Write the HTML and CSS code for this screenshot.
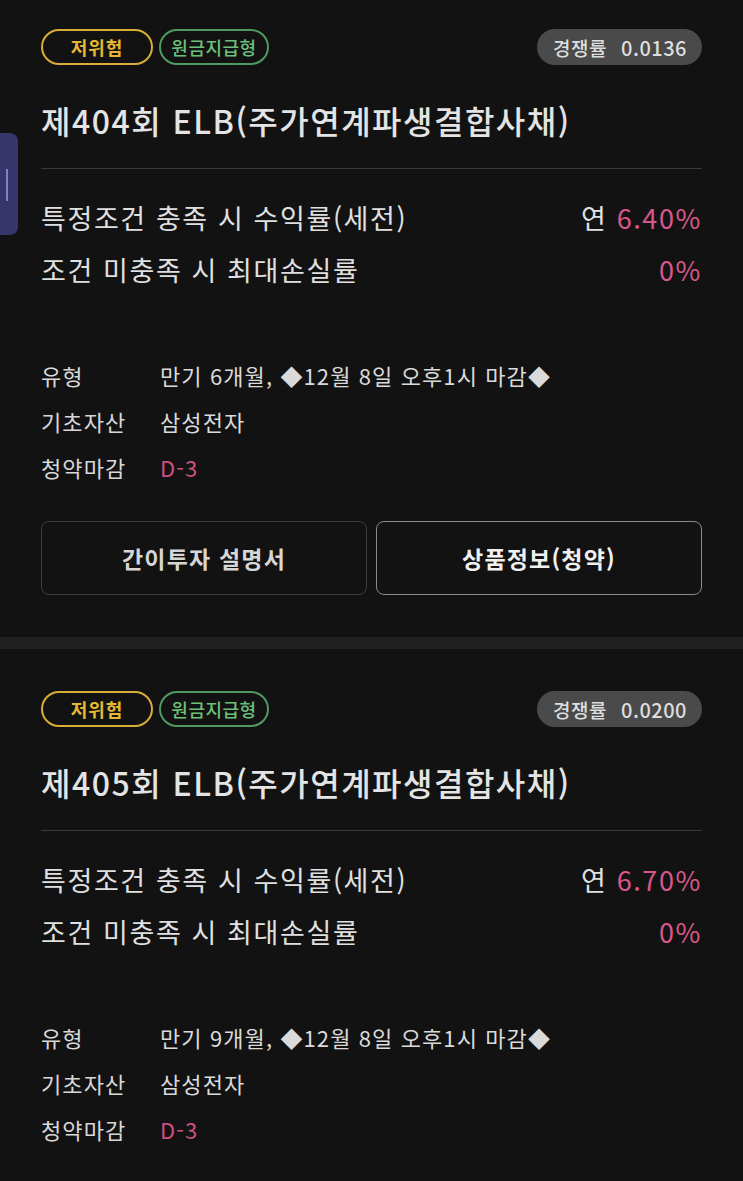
FILE: index.html
```html
<!DOCTYPE html>
<html lang="ko">
<head>
    <meta charset="UTF-8">
    <meta name="viewport" content="width=device-width, initial-scale=1.0">
    <title>ELB 청약</title>
    <link rel="stylesheet" href="styles.css">
</head>
<body>
    <div class="side-tab"><span></span></div>

    <div class="list">
        <div class="card">
            <div class="card-head">
                <div class="tags">
                    <span class="tag risk">저위험</span>
                    <span class="tag principal">원금지급형</span>
                </div>
                <span class="rate-chip">경쟁률 <b>0.0136</b></span>
            </div>
            <h2 class="title">제404회 ELB(주가연계파생결합사채)</h2>
            <div class="yield">
                <div class="yield-row">
                    <span>특정조건 충족 시 수익률(세전)</span>
                    <span>연 <em>6.40%</em></span>
                </div>
                <div class="yield-row">
                    <span>조건 미충족 시 최대손실률</span>
                    <span><em>0%</em></span>
                </div>
            </div>
            <dl class="info">
                <div class="info-row"><dt>유형</dt><dd>만기 6개월, ◆12월 8일 오후1시 마감◆</dd></div>
                <div class="info-row"><dt>기초자산</dt><dd>삼성전자</dd></div>
                <div class="info-row"><dt>청약마감</dt><dd class="due">D-3</dd></div>
            </dl>
            <div class="actions">
                <button class="btn">간이투자 설명서</button>
                <button class="btn primary">상품정보(청약)</button>
            </div>
        </div>

        <div class="card">
            <div class="card-head">
                <div class="tags">
                    <span class="tag risk">저위험</span>
                    <span class="tag principal">원금지급형</span>
                </div>
                <span class="rate-chip">경쟁률 <b>0.0200</b></span>
            </div>
            <h2 class="title">제405회 ELB(주가연계파생결합사채)</h2>
            <div class="yield">
                <div class="yield-row">
                    <span>특정조건 충족 시 수익률(세전)</span>
                    <span>연 <em>6.70%</em></span>
                </div>
                <div class="yield-row">
                    <span>조건 미충족 시 최대손실률</span>
                    <span><em>0%</em></span>
                </div>
            </div>
            <dl class="info">
                <div class="info-row"><dt>유형</dt><dd>만기 9개월, ◆12월 8일 오후1시 마감◆</dd></div>
                <div class="info-row"><dt>기초자산</dt><dd>삼성전자</dd></div>
                <div class="info-row"><dt>청약마감</dt><dd class="due">D-3</dd></div>
            </dl>
            <div class="actions">
                <button class="btn">간이투자 설명서</button>
                <button class="btn primary">상품정보(청약)</button>
            </div>
        </div>
    </div>
</body>
</html>
```

FILE: styles.css
```css
body {
    font-family: 'Noto Sans CJK KR', 'Noto Sans', sans-serif;
    margin: 0;
    padding: 0;
    background: #121212;
    color: #e2e2e2;
    height: 1181px;
    overflow: hidden;
}
.side-tab {
    position: absolute;
    left: 0;
    top: 133px;
    width: 18px;
    height: 102px;
    background: #38346c;
    border-radius: 0 8px 8px 0;
}
.side-tab span {
    position: absolute;
    left: 6px;
    top: 36px;
    width: 2px;
    height: 32px;
    background: #8580c4;
}
.card {
    padding: 42px 41px;
    border-bottom: 12px solid #202020;
}
.card:first-child {
    padding-top: 29px;
}
.card-head {
    display: flex;
    justify-content: space-between;
    align-items: center;
}
.tags {
    display: flex;
    gap: 6px;
}
.tag {
    display: inline-flex;
    align-items: center;
    justify-content: center;
    height: 36px;
    box-sizing: border-box;
    border-radius: 18px;
    font-size: 18px;
    font-weight: bold;
    letter-spacing: 1px;
}
.tag.risk {
    width: 112px;
    border: 2px solid #d9ad36;
    color: #e6b733;
}
.tag.principal {
    width: 110px;
    border: 2px solid #4f9a60;
    color: #6cc07c;
    font-weight: 500;
    letter-spacing: 0.5px;
}
.rate-chip {
    display: inline-flex;
    align-items: center;
    gap: 14px;
    height: 36px;
    padding: 0 15px 0 16px;
    border-radius: 18px;
    background: #4a4a4a;
    color: #dedede;
    font-size: 19px;
    font-weight: 500;
    letter-spacing: 0.5px;
}
.rate-chip b {
    font-weight: 500;
    font-size: 20px;
}
.title {
    margin: 34px 0 0;
    padding-bottom: 27px;
    border-bottom: 1px solid #3a3a3a;
    font-size: 32px;
    line-height: 42px;
    font-weight: 500;
    letter-spacing: 1.5px;
    color: #e4e4e4;
}
.yield {
    margin-top: 23px;
}
.yield-row {
    display: flex;
    justify-content: space-between;
    font-size: 27px;
    line-height: 52px;
    letter-spacing: 1.6px;
    color: #e0e0e0;
}
.yield-row em {
    font-style: normal;
    color: #d9578c;
}
.info {
    margin: 56px 0 0;
}
.info-row {
    display: flex;
    font-size: 22px;
    line-height: 46px;
    letter-spacing: 1.1px;
}
.info-row dt {
    width: 119px;
    color: #d8d8d8;
}
.info-row dd {
    margin: 0;
    color: #dadada;
}
.info-row .due {
    color: #cf4f85;
}
.actions {
    display: grid;
    grid-template-columns: 1fr 1fr;
    gap: 9px;
    margin-top: 31px;
}
.btn {
    height: 74px;
    background: #121212;
    border: 1px solid #3c3c3c;
    border-radius: 8px;
    color: #d6d6d6;
    font-family: inherit;
    font-size: 23px;
    font-weight: bold;
    letter-spacing: 1.2px;
}
.btn.primary {
    border-color: #8a8a8a;
    color: #f0f0f0;
}
```
